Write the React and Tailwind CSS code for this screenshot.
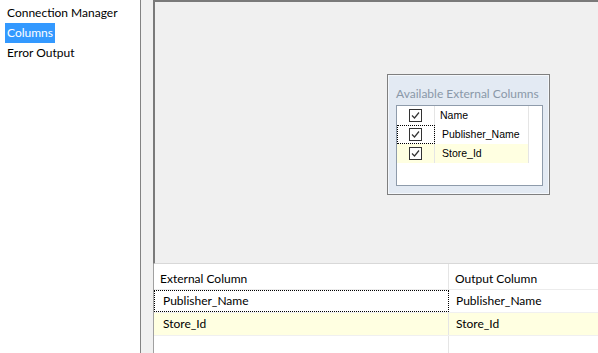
const FONT = { fontFamily: 'Lato, "Open Sans", sans-serif' }

function Check() {
  return (
    <svg width="13" height="13" viewBox="0 0 13 13" className="block">
      <rect x="0.5" y="0.5" width="12" height="12" fill="#fff" stroke="#333" />
      <path d="M3 6.5 L5.5 9 L10 3.5" fill="none" stroke="#333" strokeWidth="1.2" />
    </svg>
  )
}

function ListRow({ label, active }) {
  return (
    <div className="h-[20px] flex items-center pl-[5px]">
      <span className={active ? 'bg-[#3399ff] text-white px-[2px] leading-[20px]' : 'px-[2px] text-black'}>{label}</span>
    </div>
  )
}

function ExtRow({ name, header, focused, yellow }) {
  return (
    <div className={`flex h-[19px] w-[132px] ${yellow ? 'bg-[#ffffe1]' : ''}`}>
      <div className={`w-[38px] flex items-center justify-center border-r border-[#e5e5e5] ${focused ? 'outline outline-1 outline-dotted outline-black -outline-offset-1' : ''}`}>
        <Check />
      </div>
      <div className={`flex-1 flex items-center border-r border-[#e5e5e5] ${header ? 'pl-[5px]' : 'pl-[7px]'}`} style={{ fontFamily: '"Liberation Sans", Arial, sans-serif', fontSize: '10.5px' }}>
        {name}
      </div>
    </div>
  )
}

export default function App() {
  return (
    <div className="w-[598px] h-[353px] flex bg-[#f0f0f0] text-[12px] overflow-hidden" style={FONT}>
      <div className="w-[141px] h-full bg-white border-r border-[#828282] pt-[3px]">
        <ListRow label="Connection Manager" />
        <ListRow label="Columns" active />
        <ListRow label="Error Output" />
      </div>

      <div className="ml-[12px] flex-1 flex flex-col min-h-0">
        <div className="h-[264px] shrink-0 border-t-2 border-l-2 border-t-[#7a7a7a] border-l-[#7a7a7a] border-b border-b-[#d8d8d8] pl-[232px] pt-[72px]">
          <div className="w-[163px] h-[121px] border border-[#7f7f7f] bg-[#e3eaf3] shadow-[inset_0_0_0_1px_#f4f7fb] px-[8px] flex flex-col">
            <div className="h-[30px] flex items-center pt-[8px] text-[#8a98a8] whitespace-nowrap">Available External Columns</div>
            <div className="h-[81px] w-[147px] bg-white border border-[#8e9bab]">
              <ExtRow name="Name" header />
              <ExtRow name="Publisher_Name" focused />
              <ExtRow name="Store_Id" yellow />
            </div>
          </div>
        </div>

        <div className="flex-1 min-h-0 bg-white border-l border-[#a0a0a0] text-black">
          <div className="flex h-[26px] border-b border-[#ececec]">
            <div className="w-[295px] flex items-center pl-[6px] pt-[4px] border-r border-[#e5e5e5]">External Column</div>
            <div className="flex-1 flex items-center pl-[6px] pt-[4px]">Output Column</div>
          </div>
          <div className="flex h-[23px] border-b border-[#f0f0f0]">
            <div className="w-[295px] flex items-center pl-[9px] outline outline-1 outline-dotted outline-black -outline-offset-1">Publisher_Name</div>
            <div className="flex-1 flex items-center pl-[7px]">Publisher_Name</div>
          </div>
          <div className="flex h-[23px] bg-[#ffffe1] border-b border-[#f0f0f0]">
            <div className="w-[295px] flex items-center pl-[9px] border-r border-[#e5e5e5]">Store_Id</div>
            <div className="flex-1 flex items-center pl-[7px]">Store_Id</div>
          </div>
          <div className="flex h-[20px]">
            <div className="w-[295px] border-r border-[#e5e5e5]" />
          </div>
        </div>
      </div>
    </div>
  )
}
